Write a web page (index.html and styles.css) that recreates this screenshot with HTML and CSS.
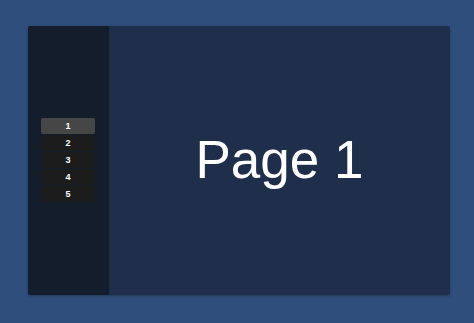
FILE: index.html
```html
<!DOCTYPE html>
<html lang="en">
<head>
    <meta charset="UTF-8">
    <meta name="viewport" content="width=device-width, initial-scale=1.0">
    <title>Pages</title>
    <link rel="stylesheet" href="styles.css">
</head>
<body>
    <div class="container">
        <nav class="sidebar">
            <div class="pager">
                <button class="page-button active">1</button>
                <button class="page-button">2</button>
                <button class="page-button">3</button>
                <button class="page-button">4</button>
                <button class="page-button">5</button>
            </div>
        </nav>
        <main class="content">
            <h1 id="page-title">Page 1</h1>
        </main>
    </div>
</body>
</html>
```

FILE: styles.css
```css
* {
    margin: 0;
    padding: 0;
    box-sizing: border-box;
    font-family: "Liberation Sans", Arial, sans-serif;
}

html, body {
    height: 100%;
}

body {
    background-color: #2f4e7c;
    padding: 26px 24px 28px 28px;
}

.container {
    display: flex;
    height: 269px;
    width: 422px;
    border-radius: 2px;
    overflow: hidden;
    box-shadow: 0 1px 3px rgba(0, 0, 0, 0.3);
}

.sidebar {
    width: 81px;
    background-color: #141d2b;
    display: flex;
    align-items: center;
    justify-content: center;
}

.pager {
    display: flex;
    flex-direction: column;
    gap: 1px;
    width: 54px;
    margin-left: -1px;
    margin-top: -1px;
}

.page-button {
    height: 16px;
    border: none;
    border-radius: 2px;
    background-color: #1c1c1c;
    color: white;
    font-size: 9px;
    font-weight: bold;
    cursor: pointer;
}

.page-button.active {
    background-color: #464646;
}

.content {
    flex: 1;
    background-color: #1f2e4a;
    display: flex;
    align-items: center;
    justify-content: center;
}

.content h1 {
    color: white;
    font-size: 53px;
    font-weight: normal;
    margin-top: -3px;
}
```
